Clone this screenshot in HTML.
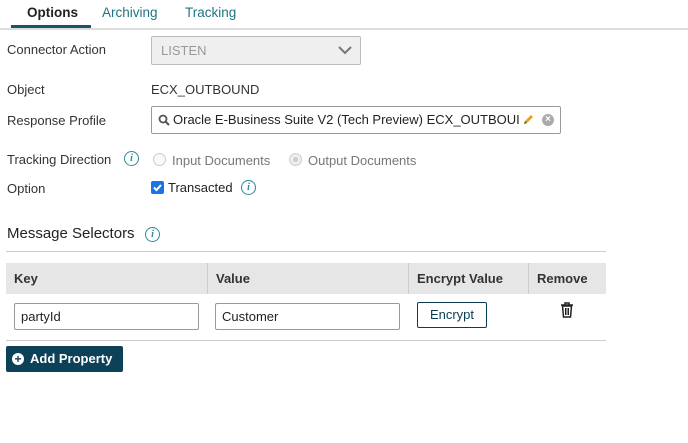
<!DOCTYPE html>
<html><head><style>
*{box-sizing:border-box;margin:0;padding:0}
body{width:688px;height:443px;background:#fff;font-family:"Liberation Sans",sans-serif;font-size:13px;color:#333;position:relative;overflow:hidden}
.a{position:absolute;white-space:nowrap}
.tab{top:5px;font-size:13.5px;color:#1f7483}
.info{width:15px;height:15px;border:1.3px solid #2a8a99;border-radius:50%;color:#2a8a99;font:italic bold 10px "Liberation Serif",serif;text-align:center;line-height:13px}
.inp{border:1px solid #999;border-radius:2px;background:#fff;height:27px;padding:0 6px;line-height:25px}
.th{top:263px;height:31px;background:#e6e6e6;border-right:1px solid #ccc;font-weight:bold;line-height:31px;padding-left:8px;color:#333}
.radio{width:13px;height:13px;border:1px solid #ccc;border-radius:50%;background:#fafafa}
</style></head><body>
<div class="a tab" style="left:27px;font-weight:bold;color:#222">Options</div>
<div class="a tab" style="left:102px">Archiving</div>
<div class="a tab" style="left:185px">Tracking</div>
<div class="a" style="left:0;top:28px;width:688px;height:2px;background:#ddd"></div>
<div class="a" style="left:11px;top:25px;width:80px;height:3px;background:#1a5468"></div>

<div class="a" style="left:7px;top:42px">Connector Action</div>
<div class="a" style="left:151px;top:36px;width:210px;height:29px;background:#efefef;border:1px solid #bbb;border-radius:2px;color:#999;padding-left:9px;line-height:27px">LISTEN
<svg style="position:absolute;right:8px;top:9px" width="14" height="9" viewBox="0 0 14 9"><path d="M1 1l6 6 6-6" fill="none" stroke="#777" stroke-width="2"/></svg></div>

<div class="a" style="left:7px;top:82px">Object</div>
<div class="a" style="left:151px;top:82px">ECX_OUTBOUND</div>

<div class="a" style="left:7px;top:113px">Response Profile</div>
<div class="a inp" style="left:151px;top:106px;width:410px;height:28px;padding-left:21px;line-height:26px;color:#222">Oracle E-Business Suite V2 (Tech Preview) ECX_OUTBOUI
<svg style="position:absolute;left:6px;top:7px" width="12" height="12" viewBox="0 0 12 12"><circle cx="5" cy="5" r="3.5" fill="none" stroke="#555" stroke-width="1.8"/><path d="M7.5 7.5L11 11" stroke="#555" stroke-width="2"/></svg>
<svg style="position:absolute;left:370px;top:6px" width="13" height="13" viewBox="0 0 13 13"><path d="M2 11l1-3 6-6 2 2-6 6z" fill="#e8a21a"/><path d="M2 11l1-3 2 2z" fill="#555"/></svg>
<div style="position:absolute;left:390px;top:7px;width:12px;height:12px;border-radius:50%;background:#aaa;color:#fff;font-size:10px;line-height:12px;text-align:center;font-weight:bold">×</div>
</div>

<div class="a" style="left:7px;top:152px">Tracking Direction</div>
<div class="a info" style="left:124px;top:151px">i</div>
<div class="a radio" style="left:153px;top:153px"></div>
<div class="a" style="left:172px;top:153px;color:#777">Input Documents</div>
<div class="a radio" style="left:289px;top:153px;background:#eee"><div style="margin:3px;width:5px;height:5px;border-radius:50%;background:#ccc"></div></div>
<div class="a" style="left:308px;top:153px;color:#777">Output Documents</div>

<div class="a" style="left:7px;top:181px">Option</div>
<div class="a" style="left:151px;top:181px;width:13px;height:13px;background:#1a73e8;border-radius:2px"><svg width="13" height="13" viewBox="0 0 13 13"><path d="M3 6.5l2.5 2.5 4.5-5" fill="none" stroke="#fff" stroke-width="2"/></svg></div>
<div class="a" style="left:168px;top:180px;color:#222">Transacted</div>
<div class="a info" style="left:241px;top:180px">i</div>

<div class="a" style="left:7px;top:225px;font-size:15px;color:#222">Message Selectors</div>
<div class="a info" style="left:145px;top:227px">i</div>
<div class="a" style="left:6px;top:251px;width:600px;height:1px;background:#ccc"></div>

<div class="a th" style="left:6px;width:202px">Key</div>
<div class="a th" style="left:208px;width:201px">Value</div>
<div class="a th" style="left:409px;width:120px">Encrypt Value</div>
<div class="a th" style="left:529px;width:77px;border-right:none">Remove</div>

<div class="a inp" style="left:14px;top:303px;width:185px;color:#222">partyId</div>
<div class="a inp" style="left:215px;top:303px;width:185px;color:#222">Customer</div>
<div class="a" style="left:417px;top:302px;width:70px;height:26px;border:1px solid #0b3d50;border-radius:2px;text-align:center;line-height:24px;color:#0b3d50">Encrypt</div>
<svg class="a" style="left:560px;top:302px" width="14" height="16" viewBox="0 0 14 16"><path d="M1 3h12M5 3V1h4v2" fill="none" stroke="#222" stroke-width="1.5"/><path d="M2.5 4l1 11h7l1-11z" fill="none" stroke="#222" stroke-width="1.5"/><path d="M5.5 6v7M7 6v7M8.5 6v7" stroke="#222" stroke-width="1"/></svg>
<div class="a" style="left:6px;top:340px;width:600px;height:1px;background:#ccc"></div>

<div class="a" style="left:6px;top:346px;width:117px;height:26px;background:#0d4158;border-radius:2px;color:#fff;font-weight:bold;line-height:26px;padding-left:24px">Add Property
<div style="position:absolute;left:6px;top:7px;width:12px;height:12px;border-radius:50%;background:#fff;color:#0d4158;font-size:12px;line-height:12px;text-align:center">+</div></div>
</body></html>
